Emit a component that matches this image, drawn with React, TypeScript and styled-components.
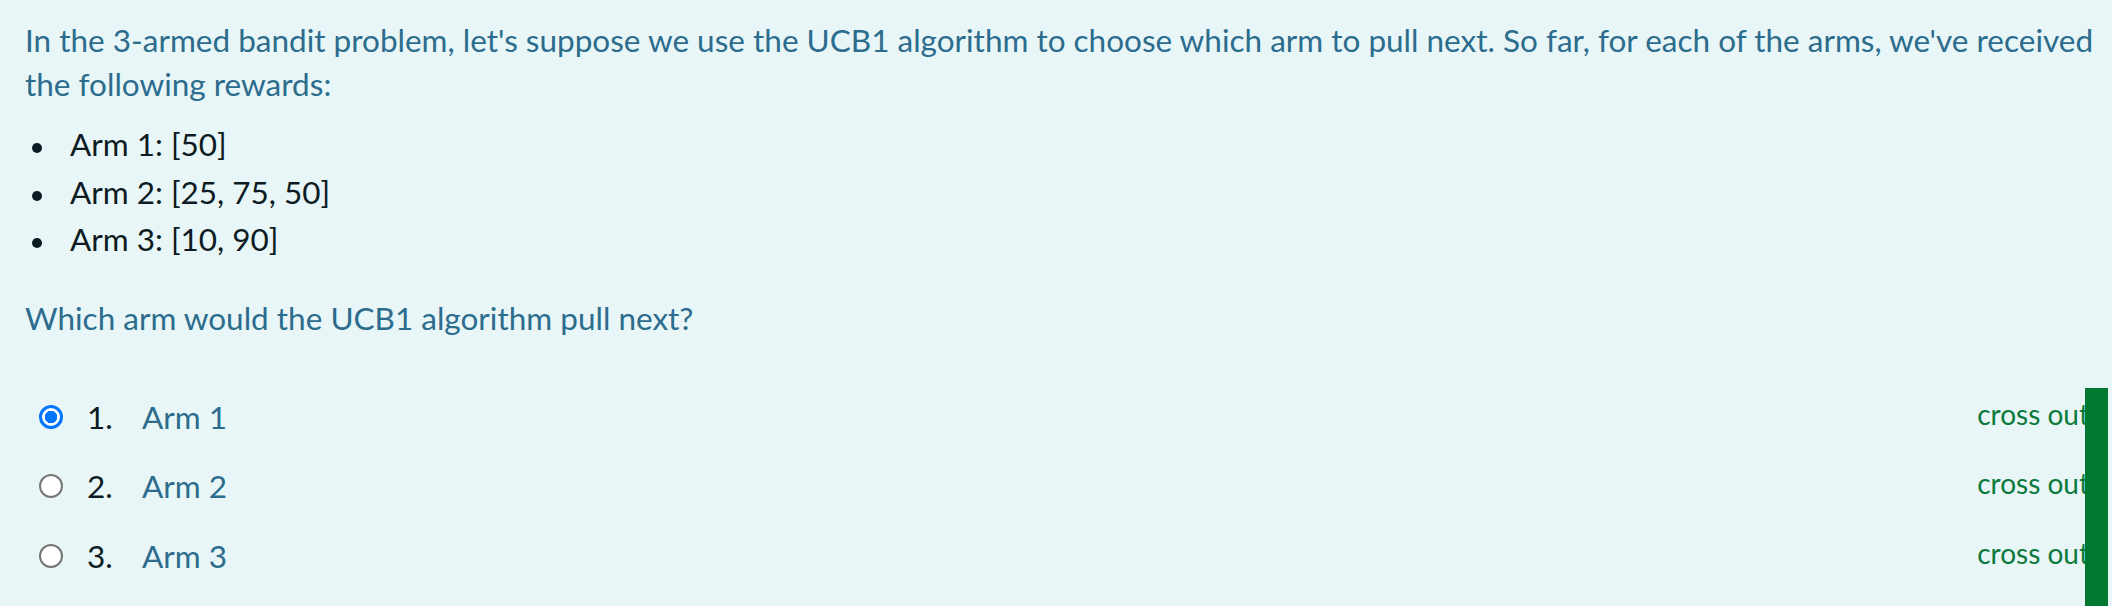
import styled, { createGlobalStyle } from "styled-components";

const GlobalStyle = createGlobalStyle`
  html, body {
    margin: 0;
    padding: 0;
    background: #e8f6f8;
  }
  body {
    font-family: Lato, "Open Sans", sans-serif;
    overflow: hidden;
  }
`;

const Page = styled.div`
  padding: 18px 4px 0 25px;
  background: #e8f6f8;
  min-height: 606px;
  box-sizing: border-box;
`;

const Prompt = styled.p`
  margin: 0;
  font-size: 31.5px;
  line-height: 44px;
  color: #2c6c8d;
`;

const Rewards = styled.ul`
  list-style: none;
  margin: 15px 0 32px;
  padding: 0;
`;

const Reward = styled.li`
  font-size: 31.5px;
  line-height: 47.5px;
  color: #0c1c22;

  &::before {
    content: "";
    display: inline-block;
    width: 10px;
    height: 10px;
    border-radius: 50%;
    background: #0c1c22;
    vertical-align: middle;
    margin: 0 28px 0 7px;
  }
`;

const Options = styled.div`
  display: flex;
  margin-top: 48px;
`;

const OptionList = styled.div`
  flex: 1;
  display: flex;
  flex-direction: column;
  gap: 11.5px;
  padding-bottom: 40px;
`;

const OptionRow = styled.label`
  display: flex;
  align-items: center;
  height: 58px;
  overflow: hidden;
  font-size: 31.5px;
`;

const Radio = styled.input.attrs({ type: "radio", name: "arm" })`
  appearance: none;
  box-sizing: border-box;
  width: 24px;
  height: 24px;
  margin: 0 24px 0 14px;
  border-radius: 50%;
  border: 2px solid #767676;
  background: #ffffff;

  &:checked {
    border: 3px solid #0075ff;
    background: radial-gradient(circle, #0075ff 0 6px, #ffffff 6.5px);
  }
`;

const Number = styled.span`
  width: 55px;
  color: #0c1c22;
`;

const OptionText = styled.span`
  flex: 1;
  color: #2c6c8d;
`;

const CrossOut = styled.button`
  border: none;
  background: none;
  padding: 0;
  margin-right: -4px;
  font-family: inherit;
  font-size: 28px;
  color: #0b7a3c;
  white-space: nowrap;
  transform: translateY(-3px);
`;

const Bar = styled.div`
  width: 23px;
  background: #00782f;
`;

const arms = [
  { label: "Arm 1", rewards: "[50]" },
  { label: "Arm 2", rewards: "[25, 75, 50]" },
  { label: "Arm 3", rewards: "[10, 90]" },
];

export default function App() {
  return (
    <>
      <GlobalStyle />
      <Page>
        <Prompt>
          In the 3-armed bandit problem, let's suppose we use the UCB1 algorithm to choose which arm to
          pull next. So far, for each of the arms, we've received the following rewards:
        </Prompt>
        <Rewards>
          {arms.map((a) => (
            <Reward key={a.label}>
              {a.label}: {a.rewards}
            </Reward>
          ))}
        </Rewards>
        <Prompt>Which arm would the UCB1 algorithm pull next?</Prompt>
        <Options>
          <OptionList>
            {arms.map((a, i) => (
              <OptionRow key={a.label}>
                <Radio defaultChecked={i === 0} />
                <Number>{i + 1}.</Number>
                <OptionText>{a.label}</OptionText>
                <CrossOut type="button">cross out</CrossOut>
              </OptionRow>
            ))}
          </OptionList>
          <Bar />
        </Options>
      </Page>
    </>
  );
}
